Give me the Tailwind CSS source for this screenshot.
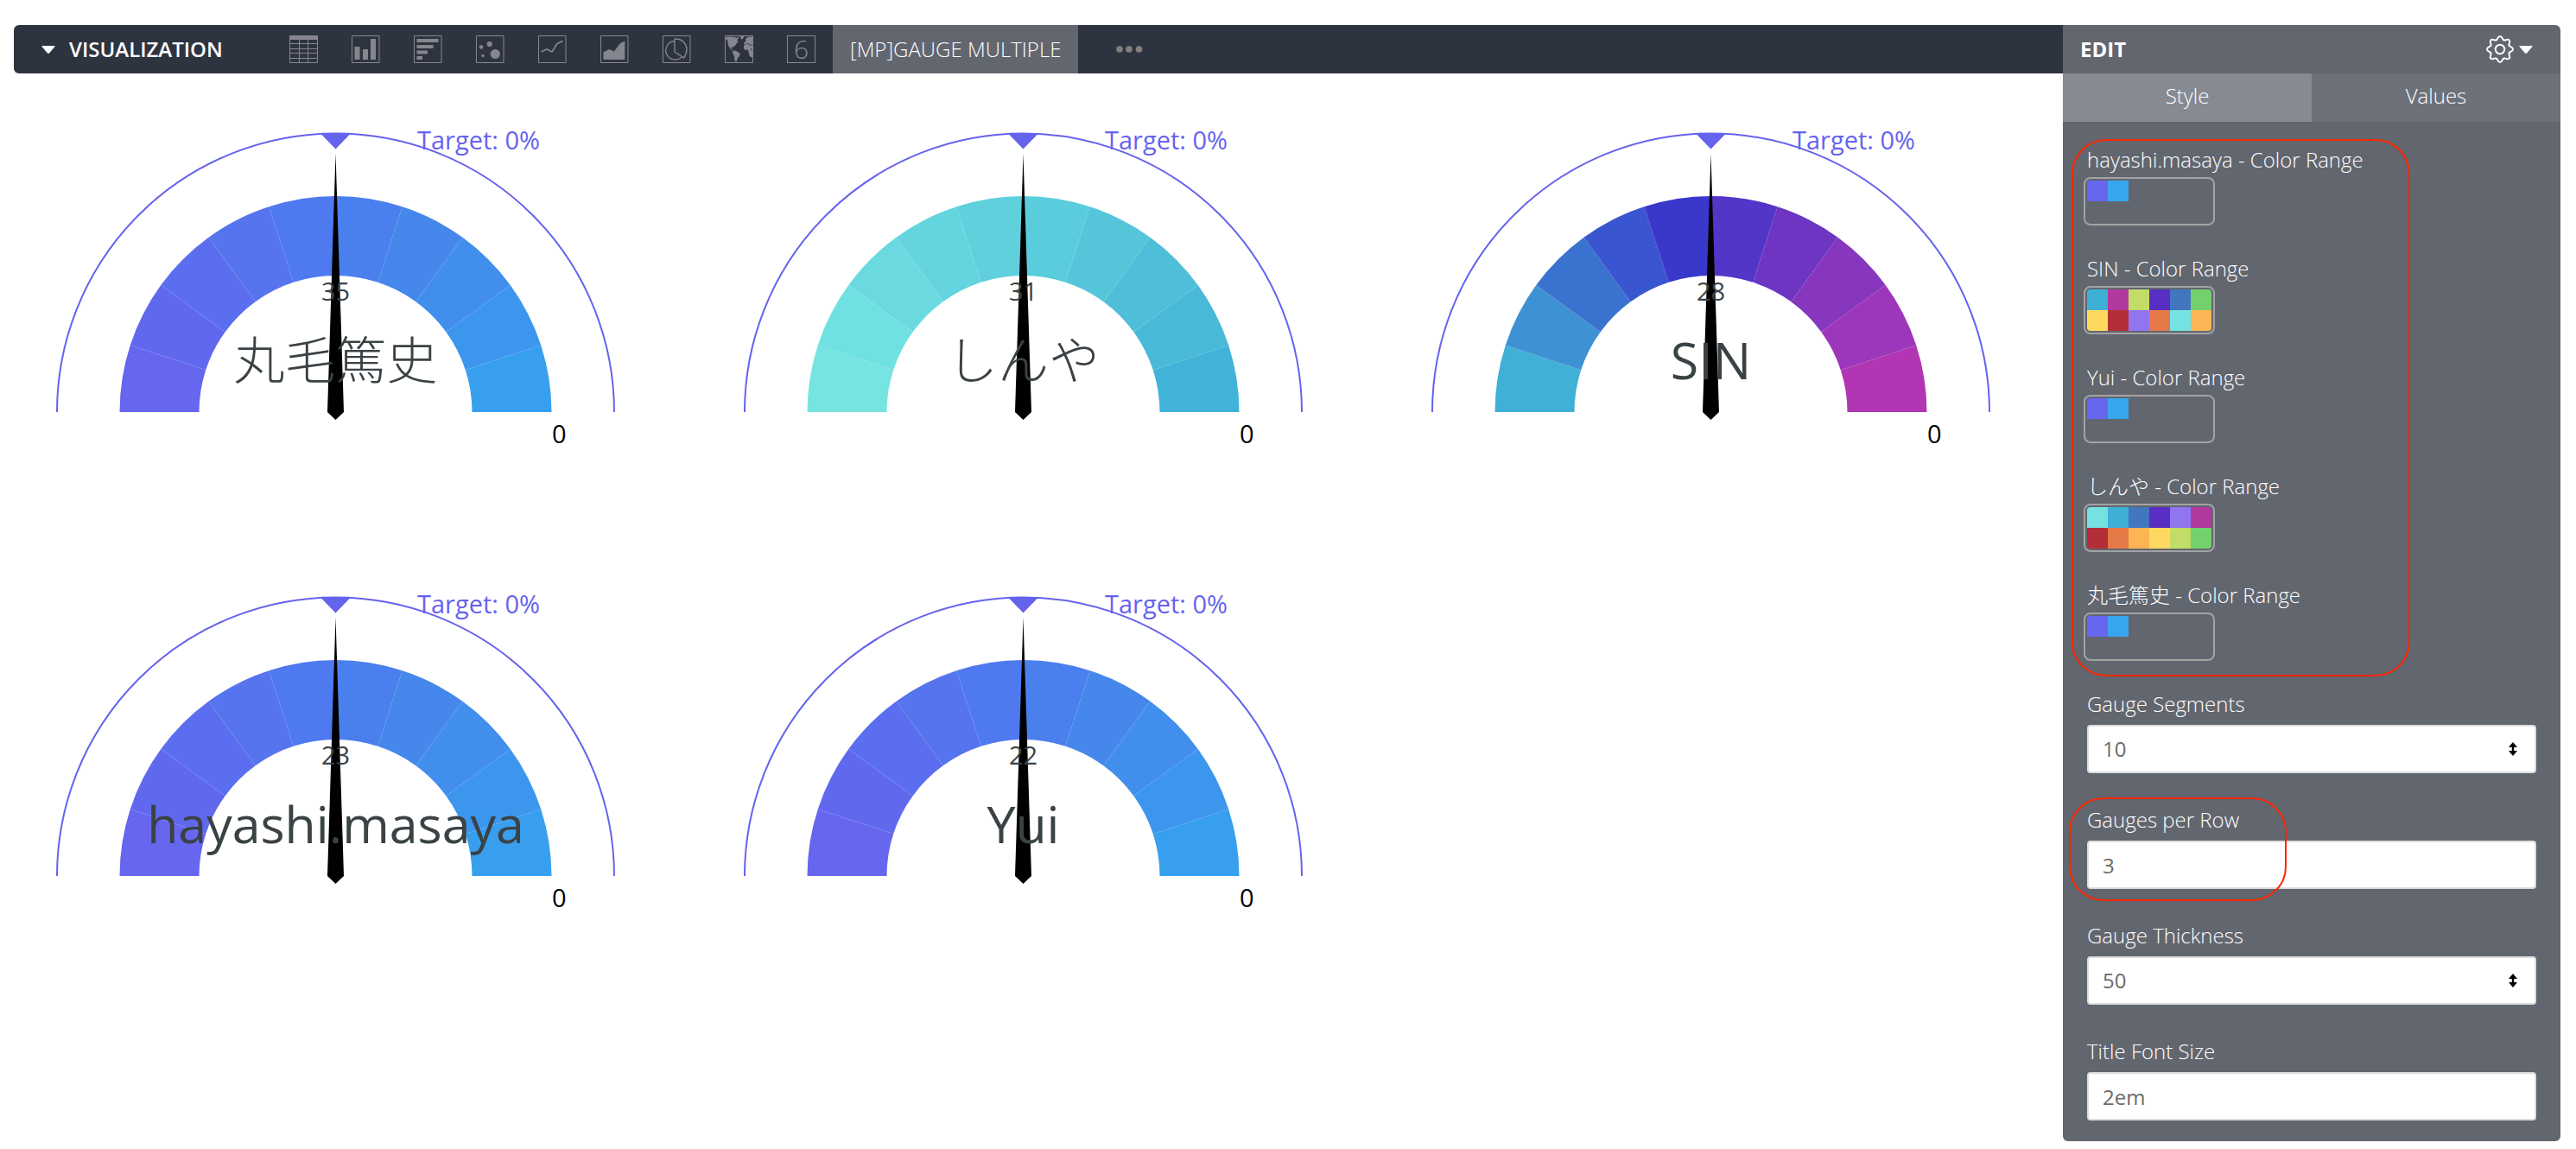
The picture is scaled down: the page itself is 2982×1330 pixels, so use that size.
<!DOCTYPE html>
<html lang="en">
<head>
  <meta charset="UTF-8" />
  <meta name="viewport" content="width=device-width, initial-scale=1.0" />
  <title>Gauge Multiple</title>
  <script src="https://cdn.jsdelivr.net/npm/@tailwindcss/browser@4"></script>
</head>
<body class="bg-white font-['Open_Sans','Noto_Sans_CJK_JP',sans-serif] text-2xl text-white">
  <div class="flex items-start pt-[29px] pl-4 pr-[18px]">

    <!-- Visualization -->
    <main class="flex-1 min-w-0">
      <header class="flex items-center h-14 bg-[#2e343f] rounded-tl-md rounded-bl-md">
        <button class="flex items-center gap-4 pl-8 w-[319px] font-semibold">
          <svg class="w-4 h-[9px]" viewBox="0 0 16 9" fill="currentColor"><path d="M1 0h14q1 0 .5 1L9 8.500q-1 .8-2 0L.5 1Q0 0 1 0z" /></svg>
          VISUALIZATION
        </button>
        <nav class="flex gap-[39px] text-[#86868f]">
          <button aria-label="Table">
            <svg class="w-[33px] h-8" viewBox="0 0 33 32" fill="none" stroke="currentColor">
              <path d="M.5.5h32v31H.5zM.5 9.500h32M.5 15.500h32M.5 20.500h32M.5 26.500h32M11.500 5v26M21.500 5v26" />
              <path d="M0 0h33v5H0z" fill="currentColor" stroke="none" />
            </svg>
          </button>
          <button aria-label="Column">
            <svg class="w-[33px] h-8" viewBox="0 0 33 32" fill="currentColor">
              <path d="M.5.5h31.500v31H.5z" fill="none" stroke="currentColor" />
              <path d="M3.500 13h6v15h-6zM13 16h6v12h-6zM22 4h6v24h-6z" />
            </svg>
          </button>
          <button aria-label="Bar">
            <svg class="w-[33px] h-8" viewBox="0 0 33 32" fill="currentColor">
              <path d="M.5.5h31.500v31H.5z" fill="none" stroke="currentColor" />
              <path d="M3.500 4h25v4h-25zM3.500 11h19v4h-19zM3.500 17.500h12.500v4H3.500zM3.500 24h6.500v4H3.500z" />
            </svg>
          </button>
          <button aria-label="Scatterplot">
            <svg class="w-[33px] h-8" viewBox="0 0 33 32" fill="currentColor">
              <path d="M.5.5h31.500v31H.5z" fill="none" stroke="currentColor" />
              <circle cx="6" cy="13.500" r="2.300" /><circle cx="15.700" cy="10" r="3.100" /><circle cx="8" cy="23.500" r="1.700" /><circle cx="22.300" cy="21.500" r="5.600" />
            </svg>
          </button>
          <button aria-label="Line">
            <svg class="w-[33px] h-8" viewBox="0 0 33 32" fill="none" stroke="currentColor">
              <path d="M.5.5h31.500v31H.5z" />
              <path d="M3.500 19l6.500-3 6 3 6-9.500 6.500-3" stroke-width="1.600" />
            </svg>
          </button>
          <button aria-label="Area">
            <svg class="w-[33px] h-8" viewBox="0 0 33 32" fill="currentColor">
              <path d="M.5.5h31.500v31H.5z" fill="none" stroke="currentColor" />
              <path d="M3.500 28v-8.500L10 16l6 2.500L23 9l5.300-2.500V28z" />
            </svg>
          </button>
          <button aria-label="Pie">
            <svg class="w-[33px] h-8" viewBox="0 0 33 32" fill="none" stroke="currentColor" stroke-width="1.300">
              <path d="M.5.5h31.500v31H.5z" stroke-width="1" />
              <path d="M14 4C24 3.500 28 11 28 16c0 4-1.500 7.500-3.300 10L14 19z" />
              <path d="M14 6.500A10.800 10.800 0 1 0 22.500 24.600" />
            </svg>
          </button>
          <button aria-label="Map">
            <svg class="w-[33px] h-8" viewBox="0 0 33 32" fill="currentColor">
              <path d="M.5.5h32v31H.5z" fill="none" stroke="currentColor" />
              <path d="M.5 3l3-1.500 8 .5 2 1 2-1.500.5 2.500-2 1 2 2.500-2 1-1.500 3-2 1-.5 1.500-2-.5-1 1 1.500 1.500 1.500 2 2-.5 3 1.500 3 2.500-1.500 3-1.500 1.500-1 3-1 2-1.500-2-.5-5-2-4 .5-2-3-2.500-2-3-1-3.500L3 4.500.5 5.500z" />
              <path d="M17.500 1h5l-1 2-2 2-1-2zM22.500 8l2-1-.5-3 3-2.500 2 .5 3.500-1v24l-2 .5-2-2-1-5-1-2-3 .5-1.500-2 0-3 2-2h-1.500z" />
              <path d="M25 10l2-.5 2 1.500h3.500M30 15l2 3" fill="none" stroke="#2e343f" stroke-width=".8" />
            </svg>
          </button>
          <button class="flex items-center justify-center w-[33px] h-8 border border-current text-3xl leading-none font-light" aria-label="Single value">6</button>
        </nav>
        <button class="ml-5 h-14 px-5 bg-[#62666f] font-light whitespace-nowrap">[MP]GAUGE MULTIPLE</button>
        <button class="ml-11 text-[#857f7f]" aria-label="More">
          <svg class="w-8 h-2" viewBox="0 0 32 8" fill="currentColor"><circle cx="4" cy="4" r="3.800" /><circle cx="15" cy="4" r="3.800" /><circle cx="26.500" cy="4" r="3.800" /></svg>
        </button>
      </header>
      <div id="gauges" class="grid grid-cols-3 gap-x-[51px] pr-[35px] pt-12"></div>
    </main>

    <!-- Edit panel -->
    <aside class="w-[576px] shrink-0 bg-[#62666f] rounded-r-md rounded-bl-md pb-6">
      <div class="flex items-center justify-between h-14 pl-5 pr-8">
        <h2 class="font-bold">EDIT</h2>
        <button class="flex items-center gap-[6px]" aria-label="Settings">
          <svg class="w-8 h-8" viewBox="-16 -16 32 32" fill="none" stroke="currentColor" stroke-width="2" stroke-linecap="round">
            <path id="tooth" d="M-4.400-10.600C-2.100-11.500-2.900-15 0-15S2.100-11.500 4.400-10.600" />
            <use href="#tooth" transform="rotate(45)" />
            <use href="#tooth" transform="rotate(90)" />
            <use href="#tooth" transform="rotate(135)" />
            <use href="#tooth" transform="rotate(180)" />
            <use href="#tooth" transform="rotate(225)" />
            <use href="#tooth" transform="rotate(270)" />
            <use href="#tooth" transform="rotate(315)" />
            <circle r="5.300" />
          </svg>
          <svg class="w-4 h-[9px]" viewBox="0 0 16 9" fill="currentColor"><path d="M1 0h14q1 0 .5 1L9 8.500q-1 .8-2 0L.5 1Q0 0 1 0z" /></svg>
        </button>
      </div>
      <div class="flex h-14 font-light">
        <button class="flex-1 pb-1 bg-[#868a93]">Style</button>
        <button class="flex-1 pb-1 bg-[#6d717a]">Values</button>
      </div>

      <div class="px-7 pt-7">
        <div class="relative">
          <div id="ranges"></div>
          <div class="absolute -left-[18px] -top-2 w-[392px] h-[622px] border-2 border-[#ff2600] rounded-[40px] pointer-events-none"></div>
        </div>

        <form class="flex flex-col gap-[38px]">
          <div>
            <label for="segments" class="block h-10 leading-8 font-light">Gauge Segments</label>
            <div class="relative">
              <select id="segments" class="appearance-none block w-full h-14 px-4 bg-white border-2 border-[#ddd] rounded text-[#6b6b6b]"><option>10</option></select>
              <svg class="absolute right-[22px] top-5 w-[10px] h-4 text-black pointer-events-none" viewBox="0 0 10 16" fill="currentColor"><path d="M5 0l5 6H6.200v4H10l-5 6-5-6h3.800V6H0z" /></svg>
            </div>
          </div>
          <div class="relative">
            <label for="perRow" class="block h-10 leading-8 font-light">Gauges per Row</label>
            <input id="perRow" value="3" class="block w-full h-14 px-4 bg-white border-2 border-[#ddd] rounded text-[#6b6b6b]" />
            <div class="absolute -left-[21px] -top-[10px] w-[252px] h-[120px] border-2 border-[#ff2600] rounded-[40px] pointer-events-none"></div>
          </div>
          <div>
            <label for="thickness" class="block h-10 leading-8 font-light">Gauge Thickness</label>
            <div class="relative">
              <select id="thickness" class="appearance-none block w-full h-14 px-4 bg-white border-2 border-[#ddd] rounded text-[#6b6b6b]"><option>50</option></select>
              <svg class="absolute right-[22px] top-5 w-[10px] h-4 text-black pointer-events-none" viewBox="0 0 10 16" fill="currentColor"><path d="M5 0l5 6H6.200v4H10l-5 6-5-6h3.800V6H0z" /></svg>
            </div>
          </div>
          <div>
            <label for="titleSize" class="block h-10 leading-8 font-light">Title Font Size</label>
            <input id="titleSize" value="2em" class="block w-full h-14 px-4 bg-white border-2 border-[#ddd] rounded text-[#6b6b6b]" />
          </div>
        </form>
      </div>
    </aside>
  </div>

  <script>
    // Segment colours, left to right
    const blue = ['#6666ee', '#6069ee', '#5b6eef', '#5574ee', '#4f79ef', '#4a80ee', '#4687ec', '#428eec', '#3d96ee', '#389fee'];
    const teal = ['#76e4e1', '#6fe1e2', '#6adae0', '#64d5de', '#5fd0dc', '#5acddd', '#55c6da', '#4fbfd9', '#49b9d8', '#42b3d8'];
    const purple = ['#40b0d6', '#3e92d4', '#3a72cf', '#3955cf', '#3a38ca', '#5336c8', '#6e35c2', '#8736be', '#9c36ba', '#b236b4'];

    const gauges = [
      { title: '丸毛篤史', value: 35, colors: blue, weight: 'font-light' },
      { title: 'しんや', value: 31, colors: teal, weight: 'font-light' },
      { title: 'SIN', value: 28, colors: purple, weight: 'font-normal' },
      { title: 'hayashi.masaya', value: 23, colors: blue, weight: 'font-normal' },
      { title: 'Yui', value: 22, colors: blue, weight: 'font-normal' }
    ];

    const cx = 372.5, cy = 344, outer = 250, inner = 158;

    function point(r, i) {
      const a = Math.PI - (i * Math.PI) / 10;
      return `${(cx + r * Math.cos(a)).toFixed(2)} ${(cy - r * Math.sin(a)).toFixed(2)}`;
    }

    function segment(color, i) {
      return `<path d="M${point(outer, i)}A${outer} ${outer} 0 0 1 ${point(outer, i + 1)}L${point(inner, i + 1)}A${inner} ${inner} 0 0 0 ${point(inner, i)}z" fill="${color}" />`;
    }

    document.getElementById('gauges').innerHTML = gauges.map((g) => `
      <svg class="w-full" viewBox="0 0 745 537">
        ${g.colors.map(segment).join('')}
        <path d="M50 ${cy}A322.500 322.500 0 0 1 695 ${cy}" fill="none" stroke="#6563ee" stroke-width="2" />
        <path d="M354.500 21h36l-18 18.500z" fill="#6563ee" />
        <path d="M372.500 45l9.500 299-9.500 9-9.500-9z" fill="#000" />
        <text class="text-[29px]" x="467" y="40" fill="#6563ee">Target: 0%</text>
        <text class="text-[29px]" x="${cx}" y="215" text-anchor="middle" fill="#3a4245">${g.value}</text>
        <text class="text-[59px] ${g.weight}" x="${cx}" y="306" text-anchor="middle" fill="#3a4245">${g.title}</text>
        <text class="text-[29px]" x="623" y="380" fill="#000">0</text>
      </svg>`).join('');

    // Colour ranges in the edit panel
    const short = ['#6666ee', '#38a6ee'];
    const ranges = [
      { name: 'hayashi.masaya', colors: short },
      { name: 'SIN', colors: ['#3eb0d5', '#b1399e', '#c2dd67', '#592ec2', '#4276be', '#72d16d', '#ffd95f', '#b32f37', '#9174f0', '#e57947', '#75e2e2', '#fbb555'] },
      { name: 'Yui', colors: short },
      { name: 'しんや', colors: ['#75e2e2', '#3eb0d5', '#4276be', '#592ec2', '#9174f0', '#b1399e', '#b32f37', '#e57947', '#fbb555', '#ffd95f', '#c2dd67', '#72d16d'] },
      { name: '丸毛篤史', colors: short }
    ];

    document.getElementById('ranges').innerHTML = ranges.map((r, n) => `
      <div class="h-[126px]">
        <label for="range${n}" class="block h-9 leading-8 font-light">${r.name} - Color Range</label>
        <button id="range${n}" class="block -ml-1 w-[152px] h-14 p-0.5 border-2 border-[#a3a3a3] rounded-lg">
          <span class="grid grid-cols-6 content-start h-12 rounded overflow-hidden">
            ${r.colors.map((c) => `<span class="h-6" style="background:${c}"></span>`).join('')}
          </span>
        </button>
      </div>`).join('');
  </script>
</body>
</html>
